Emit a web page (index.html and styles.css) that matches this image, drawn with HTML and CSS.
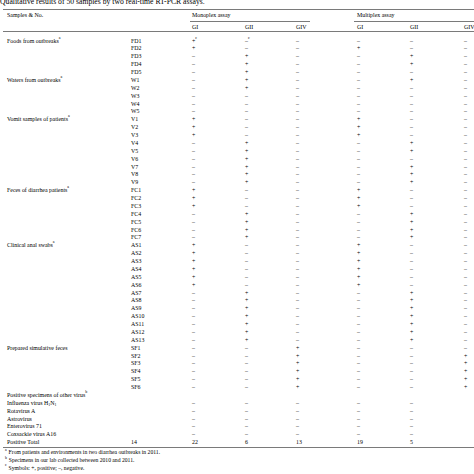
FILE: index.html
```html
<!DOCTYPE html>
<html>
<head>
<meta charset="utf-8">
<link rel="stylesheet" href="styles.css">
</head>
<body>
<div class="page">
  <div class="caption">Qualitative results of 50 samples by two real-time RT-PCR assays.</div>
  <div class="table">
    <div class="head">
      <div class="hrow hrow1">
        <span class="c1">Samples &amp; No.</span>
        <span class="grp mono"><span class="grp-label">Monoplex assay</span></span>
        <span class="grp multi"><span class="grp-label">Multiplex assay</span></span>
      </div>
      <div class="hrow hrow2">
        <span class="c1"></span><span></span>
        <span>GI</span><span>GII</span><span>GIV</span>
        <span>GI</span><span>GII</span><span>GIV</span>
      </div>
    </div>
    <div class="body">
      <div class="row"><span class="c1">Foods from outbreaks<sup>a</sup></span><span>FD1</span><span>+<sup>c</sup></span><span>–<sup>c</sup></span><span>–</span><span>–</span><span>–</span><span>–</span></div>
      <div class="row"><span class="c1"></span><span>FD2</span><span>+</span><span>–</span><span>–</span><span>+</span><span>–</span><span>–</span></div>
      <div class="row"><span class="c1"></span><span>FD3</span><span>–</span><span>+</span><span>–</span><span>–</span><span>+</span><span>–</span></div>
      <div class="row"><span class="c1"></span><span>FD4</span><span>–</span><span>+</span><span>–</span><span>–</span><span>+</span><span>–</span></div>
      <div class="row"><span class="c1"></span><span>FD5</span><span>–</span><span>+</span><span>–</span><span>–</span><span>–</span><span>–</span></div>
      <div class="row"><span class="c1">Waters from outbreaks<sup>a</sup></span><span>W1</span><span>–</span><span>+</span><span>–</span><span>–</span><span>+</span><span>–</span></div>
      <div class="row"><span class="c1"></span><span>W2</span><span>–</span><span>+</span><span>–</span><span>–</span><span>–</span><span>–</span></div>
      <div class="row"><span class="c1"></span><span>W3</span><span>–</span><span>–</span><span>–</span><span>–</span><span>–</span><span>–</span></div>
      <div class="row"><span class="c1"></span><span>W4</span><span>–</span><span>–</span><span>–</span><span>–</span><span>–</span><span>–</span></div>
      <div class="row"><span class="c1"></span><span>W5</span><span>–</span><span>–</span><span>–</span><span>–</span><span>–</span><span>–</span></div>
      <div class="row"><span class="c1">Vomit samples of patients<sup>a</sup></span><span>V1</span><span>+</span><span>–</span><span>–</span><span>+</span><span>–</span><span>–</span></div>
      <div class="row"><span class="c1"></span><span>V2</span><span>+</span><span>–</span><span>–</span><span>+</span><span>–</span><span>–</span></div>
      <div class="row"><span class="c1"></span><span>V3</span><span>+</span><span>–</span><span>–</span><span>+</span><span>–</span><span>–</span></div>
      <div class="row"><span class="c1"></span><span>V4</span><span>–</span><span>+</span><span>–</span><span>–</span><span>+</span><span>–</span></div>
      <div class="row"><span class="c1"></span><span>V5</span><span>–</span><span>+</span><span>–</span><span>–</span><span>+</span><span>–</span></div>
      <div class="row"><span class="c1"></span><span>V6</span><span>–</span><span>+</span><span>–</span><span>–</span><span>–</span><span>–</span></div>
      <div class="row"><span class="c1"></span><span>V7</span><span>–</span><span>+</span><span>–</span><span>–</span><span>+</span><span>–</span></div>
      <div class="row"><span class="c1"></span><span>V8</span><span>–</span><span>+</span><span>–</span><span>–</span><span>+</span><span>–</span></div>
      <div class="row"><span class="c1"></span><span>V9</span><span>–</span><span>+</span><span>–</span><span>–</span><span>+</span><span>–</span></div>
      <div class="row"><span class="c1">Feces of diarrhea patients<sup>a</sup></span><span>FC1</span><span>+</span><span>–</span><span>–</span><span>+</span><span>–</span><span>–</span></div>
      <div class="row"><span class="c1"></span><span>FC2</span><span>+</span><span>–</span><span>–</span><span>+</span><span>–</span><span>–</span></div>
      <div class="row"><span class="c1"></span><span>FC3</span><span>+</span><span>–</span><span>–</span><span>+</span><span>–</span><span>–</span></div>
      <div class="row"><span class="c1"></span><span>FC4</span><span>–</span><span>+</span><span>–</span><span>–</span><span>+</span><span>–</span></div>
      <div class="row"><span class="c1"></span><span>FC5</span><span>–</span><span>+</span><span>–</span><span>–</span><span>+</span><span>–</span></div>
      <div class="row"><span class="c1"></span><span>FC6</span><span>–</span><span>+</span><span>–</span><span>–</span><span>+</span><span>–</span></div>
      <div class="row"><span class="c1"></span><span>FC7</span><span>–</span><span>+</span><span>–</span><span>–</span><span>+</span><span>–</span></div>
      <div class="row"><span class="c1">Clinical anal swabs<sup>a</sup></span><span>AS1</span><span>+</span><span>–</span><span>–</span><span>+</span><span>–</span><span>–</span></div>
      <div class="row"><span class="c1"></span><span>AS2</span><span>+</span><span>–</span><span>–</span><span>+</span><span>–</span><span>–</span></div>
      <div class="row"><span class="c1"></span><span>AS3</span><span>+</span><span>–</span><span>–</span><span>+</span><span>–</span><span>–</span></div>
      <div class="row"><span class="c1"></span><span>AS4</span><span>+</span><span>–</span><span>–</span><span>+</span><span>–</span><span>–</span></div>
      <div class="row"><span class="c1"></span><span>AS5</span><span>+</span><span>–</span><span>–</span><span>+</span><span>–</span><span>–</span></div>
      <div class="row"><span class="c1"></span><span>AS6</span><span>+</span><span>–</span><span>–</span><span>+</span><span>–</span><span>–</span></div>
      <div class="row"><span class="c1"></span><span>AS7</span><span>–</span><span>+</span><span>–</span><span>–</span><span>+</span><span>–</span></div>
      <div class="row"><span class="c1"></span><span>AS8</span><span>–</span><span>+</span><span>–</span><span>–</span><span>+</span><span>–</span></div>
      <div class="row"><span class="c1"></span><span>AS9</span><span>–</span><span>+</span><span>–</span><span>–</span><span>+</span><span>–</span></div>
      <div class="row"><span class="c1"></span><span>AS10</span><span>–</span><span>+</span><span>–</span><span>–</span><span>+</span><span>–</span></div>
      <div class="row"><span class="c1"></span><span>AS11</span><span>–</span><span>+</span><span>–</span><span>–</span><span>+</span><span>–</span></div>
      <div class="row"><span class="c1"></span><span>AS12</span><span>–</span><span>+</span><span>–</span><span>–</span><span>+</span><span>–</span></div>
      <div class="row"><span class="c1"></span><span>AS13</span><span>–</span><span>+</span><span>–</span><span>–</span><span>+</span><span>–</span></div>
      <div class="row"><span class="c1">Prepared simulative feces</span><span>SF1</span><span>–</span><span>–</span><span>+</span><span>–</span><span>–</span><span>–</span></div>
      <div class="row"><span class="c1"></span><span>SF2</span><span>–</span><span>–</span><span>+</span><span>–</span><span>–</span><span>+</span></div>
      <div class="row"><span class="c1"></span><span>SF3</span><span>–</span><span>–</span><span>+</span><span>–</span><span>–</span><span>+</span></div>
      <div class="row"><span class="c1"></span><span>SF4</span><span>–</span><span>–</span><span>+</span><span>–</span><span>–</span><span>+</span></div>
      <div class="row"><span class="c1"></span><span>SF5</span><span>–</span><span>–</span><span>+</span><span>–</span><span>–</span><span>+</span></div>
      <div class="row"><span class="c1"></span><span>SF6</span><span>–</span><span>–</span><span>+</span><span>–</span><span>–</span><span>+</span></div>
      <div class="row"><span class="c1">Positive specimens of other virus<sup>b</sup></span></div>
      <div class="row"><span class="c1">Influenza virus H<sub>1</sub>N<sub>1</sub></span><span></span><span>–</span><span>–</span><span>–</span><span>–</span><span>–</span><span></span></div>
      <div class="row"><span class="c1">Rotavirus A</span><span></span><span>–</span><span>–</span><span>–</span><span>–</span><span>–</span><span></span></div>
      <div class="row"><span class="c1">Astrovirus</span><span></span><span>–</span><span>–</span><span>–</span><span>–</span><span>–</span><span></span></div>
      <div class="row"><span class="c1">Enterovirus 71</span><span></span><span>–</span><span>–</span><span>–</span><span>–</span><span>–</span><span></span></div>
      <div class="row"><span class="c1">Coxsackie virus A16</span><span></span><span>–</span><span>–</span><span>–</span><span>–</span><span>–</span><span></span></div>
      <div class="row"><span class="c1">Positive Total</span><span>14</span><span>22</span><span>6</span><span>13</span><span>19</span><span>5</span><span></span></div>
    </div>
    <div class="notes">
      <div class="note"><sup>a</sup> From patients and environments in two diarrhea outbreaks in 2011.</div>
      <div class="note"><sup>b</sup> Specimens in our lab collected between 2010 and 2011.</div>
      <div class="note"><sup>c</sup> Symbols: +, positive; –, negative.</div>
    </div>
  </div>
</div>
</body>
</html>
```

FILE: styles.css
```css
html, body {
  margin: 0;
  padding: 0;
  background: #ffffff;
  overflow: hidden;
}

body {
  font-family: "Liberation Serif", "Times New Roman", serif;
  color: #000000;
}

.page {
  width: 474px;
  height: 474px;
  overflow: hidden;
}

.caption {
  height: 9px;
  font-size: 7.7px;
  line-height: 4px;
  white-space: nowrap;
}

.table {
  margin-left: 3px;
  width: 490px;
  border-top: 1px solid #7a7a7a;
  font-size: 5.9px;
}

.hrow,
.row {
  display: grid;
  grid-template-columns: 128px 61px 53px 51px 61px 53px 54px 29px;
  white-space: nowrap;
}

.c1 {
  padding-left: 4px;
}

.hrow1 {
  height: 13px;
  line-height: 8px;
  padding-top: 1px;
  box-sizing: border-box;
}

.grp {
  display: block;
}

.mono {
  grid-column: 3 / 6;
}

.multi {
  grid-column: 6 / 9;
}

.grp-label {
  display: block;
  height: 11px;
  box-sizing: border-box;
  border-bottom: 1px solid #7a7a7a;
  padding-left: 2px;
}

.mono .grp-label {
  width: 120px;
  margin-left: -2px;
}

.multi .grp-label {
  margin-left: -3px;
  padding-left: 3px;
}

.hrow2 {
  height: 9px;
  line-height: 7px;
  padding-top: 1px;
  box-sizing: border-box;
  border-bottom: 1px solid #7a7a7a;
}

.body {
  padding-top: 5.5px;
  padding-bottom: 0.4px;
  border-bottom: 1px solid #7a7a7a;
}

.row {
  height: 7.886px;
  line-height: 7.886px;
}

sup {
  font-size: 0.68em;
  line-height: 0;
  vertical-align: 0.9em;
}

sub {
  font-size: 0.68em;
  line-height: 0;
  vertical-align: -0.25em;
}

.notes {
  padding-top: 0.8px;
  padding-left: 2px;
  font-size: 5.65px;
}

.note {
  height: 7.8px;
  line-height: 7.8px;
  white-space: nowrap;
}

.note sup {
  margin-right: 0.5px;
}
```
